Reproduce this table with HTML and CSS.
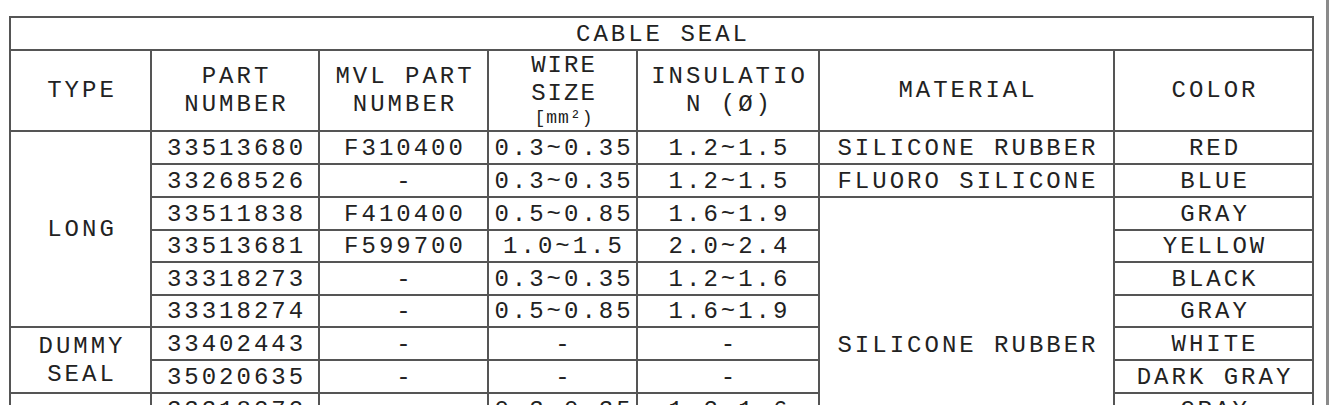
FILE: index.html
```html
<!DOCTYPE html>
<html>
<head>
<meta charset="utf-8">
<link rel="stylesheet" href="styles.css">
</head>
<body>
<div class="page">
  <div class="sheet">
    <div class="grid">
      <div class="cell title">CABLE SEAL</div>

      <div class="cell head">TYPE</div>
      <div class="cell head"><span>PART</span><span>NUMBER</span></div>
      <div class="cell head"><span>MVL PART</span><span>NUMBER</span></div>
      <div class="cell head tight"><span>WIRE</span><span>SIZE</span><span class="unit">[mm²)</span></div>
      <div class="cell head"><span>INSULATIO</span><span>N (Ø)</span></div>
      <div class="cell head">MATERIAL</div>
      <div class="cell head">COLOR</div>

      <div class="cell type long">LONG</div>
      <div class="cell type dummy"><span>DUMMY</span><span>SEAL</span></div>
      <div class="cell type next"></div>
      <div class="cell mat r3">SILICONE RUBBER</div>
      <div class="cell mat r4">FLUORO SILICONE</div>
      <div class="cell mat rest">SILICONE RUBBER</div>

      <div class="cell c2 r3">33513680</div><div class="cell c3 r3">F310400</div><div class="cell c4 r3">0.3~0.35</div><div class="cell c5 r3">1.2~1.5</div><div class="cell c7 r3">RED</div>
      <div class="cell c2 r4">33268526</div><div class="cell c3 r4">-</div><div class="cell c4 r4">0.3~0.35</div><div class="cell c5 r4">1.2~1.5</div><div class="cell c7 r4">BLUE</div>
      <div class="cell c2 r5">33511838</div><div class="cell c3 r5">F410400</div><div class="cell c4 r5">0.5~0.85</div><div class="cell c5 r5">1.6~1.9</div><div class="cell c7 r5">GRAY</div>
      <div class="cell c2 r6">33513681</div><div class="cell c3 r6">F599700</div><div class="cell c4 r6">1.0~1.5</div><div class="cell c5 r6">2.0~2.4</div><div class="cell c7 r6">YELLOW</div>
      <div class="cell c2 r7">33318273</div><div class="cell c3 r7">-</div><div class="cell c4 r7">0.3~0.35</div><div class="cell c5 r7">1.2~1.6</div><div class="cell c7 r7">BLACK</div>
      <div class="cell c2 r8">33318274</div><div class="cell c3 r8">-</div><div class="cell c4 r8">0.5~0.85</div><div class="cell c5 r8">1.6~1.9</div><div class="cell c7 r8">GRAY</div>
      <div class="cell c2 r9">33402443</div><div class="cell c3 r9">-</div><div class="cell c4 r9">-</div><div class="cell c5 r9">-</div><div class="cell c7 r9">WHITE</div>
      <div class="cell c2 r10">35020635</div><div class="cell c3 r10">-</div><div class="cell c4 r10">-</div><div class="cell c5 r10">-</div><div class="cell c7 r10">DARK GRAY</div>
      <div class="cell c2 r11">33318272</div><div class="cell c3 r11">-</div><div class="cell c4 r11">0.3~0.35</div><div class="cell c5 r11">1.2~1.6</div><div class="cell c7 r11">GRAY</div>
      <div class="cell c2 r12"></div><div class="cell c3 r12"></div><div class="cell c4 r12"></div><div class="cell c5 r12"></div><div class="cell c7 r12"></div>
      <div class="cell c2 r13"></div><div class="cell c3 r13"></div><div class="cell c4 r13"></div><div class="cell c5 r13"></div><div class="cell c7 r13"></div>
    </div>
  </div>
  <div class="edge"></div>
</div>
</body>
</html>
```

FILE: styles.css
```css
html, body {
  margin: 0;
  padding: 0;
  background: #ffffff;
}

.page {
  display: flex;
  height: 405px;
  overflow: hidden;
}

.sheet {
  padding: 16px 0 0 9px;
}

.grid {
  display: grid;
  grid-template-columns: 139px 166px 167px 147px 180px 293px 197px;
  grid-template-rows: 31px 79px 31px 31px 31px 30px 31px 30px 31px 31px 31px 31px 31px;
  gap: 2px;
  padding: 2px;
  background: #555555;
  font-family: "Liberation Mono", "DejaVu Sans Mono", monospace;
  font-size: 24px;
  letter-spacing: 3px;
  color: #222222;
}

.cell {
  background: #ffffff;
  display: flex;
  flex-direction: column;
  align-items: center;
  justify-content: center;
  line-height: 28px;
  padding-left: 3px;
  padding-top: 2px;
  white-space: nowrap;
}

.title {
  grid-column: 1 / -1;
  grid-row: 1;
}

.head {
  grid-row: 2;
  padding-top: 0;
}

.tight {
  letter-spacing: 2px;
}

.unit {
  font-size: 18px;
  line-height: 21px;
  letter-spacing: 1px;
}

.type { grid-column: 1; }
.long { grid-row: 3 / span 6; }
.dummy { grid-row: 9 / span 2; }
.next { grid-row: 11 / span 3; }

.mat { grid-column: 6; }
.rest { grid-row: 5 / span 9; }

.c2 { grid-column: 2; }
.c3 { grid-column: 3; }
.c4 { grid-column: 4; }
.c5 { grid-column: 5; }
.c7 { grid-column: 7; }

.r3 { grid-row: 3; }
.r4 { grid-row: 4; }
.r5 { grid-row: 5; }
.r6 { grid-row: 6; }
.r7 { grid-row: 7; }
.r8 { grid-row: 8; }
.r9 { grid-row: 9; }
.r10 { grid-row: 10; }
.r11 { grid-row: 11; }
.r12 { grid-row: 12; }
.r13 { grid-row: 13; }

.edge {
  width: 3px;
  margin-left: 12px;
  background: #8a8a8a;
  align-self: stretch;
}
```
